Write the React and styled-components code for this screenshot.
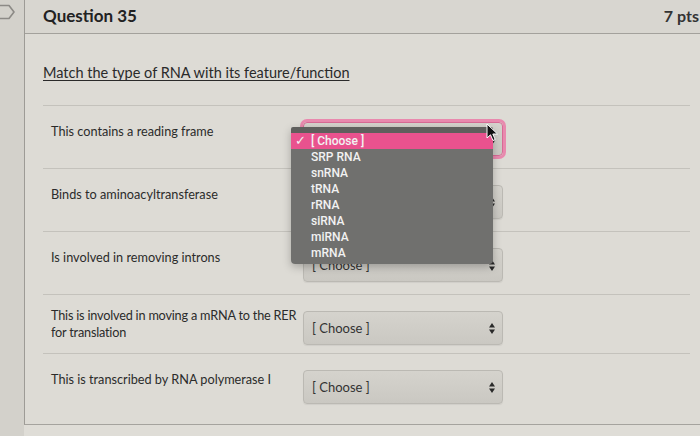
import React from "react";
import styled, { createGlobalStyle, css } from "styled-components";

const GlobalStyle = createGlobalStyle`
  html, body { margin: 0; padding: 0; }
  body {
    background: #dcdad4;
    font-family: Lato, "Open Sans", sans-serif;
    color: #2b2b2b;
  }
`;

const Page = styled.div`
  position: relative;
  display: flex;
  width: 700px;
  height: 436px;
  overflow: hidden;
  background: #dfddd7;
`;

const Gutter = styled.div`
  flex: none;
  width: 24px;
  height: 436px;
  background: #d3d1cb;
  padding-top: 4px;
  box-sizing: border-box;
`;

const Card = styled.section`
  flex: 1;
  align-self: flex-start;
  height: 425px;
  box-sizing: border-box;
  background: #dddbd5;
  border-left: 1px solid #9d9b96;
  border-bottom: 1px solid #a5a39e;
`;

const Header = styled.header`
  height: 34px;
  box-sizing: border-box;
  display: flex;
  align-items: center;
  justify-content: space-between;
  padding: 0 1px 2px 18px;
  background: #d8d6d0;
  border-bottom: 1px solid #a3a19c;
`;

const Title = styled.h2`
  margin: 0;
  font-size: 17px;
  font-weight: 700;
  color: #222;
`;

const Points = styled.span`
  font-size: 16px;
  font-weight: 700;
  color: #333;
`;

const Body = styled.div`
  padding: 30px 10px 0 18px;
`;

const Prompt = styled.p`
  margin: 0 0 23px;
  font-size: 14.5px;
  line-height: 18px;
  color: #2a2a2a;
  text-decoration: underline;
  text-decoration-thickness: 1px;
  text-underline-offset: 2px;
`;

const Rows = styled.div`
  border-top: 1px solid #c4c2bc;
`;

const Row = styled.div`
  display: flex;
  align-items: flex-start;
  padding: 16px 0 ${(p) => p.$bottom ?? 12}px 8px;
  border-bottom: ${(p) => (p.$last ? "none" : "1px solid #c4c2bc")};
`;

const Label = styled.div`
  flex: none;
  width: 252px;
  white-space: nowrap;
  font-size: 12.7px;
  line-height: 17px;
  color: #2b2b2b;
  margin-top: ${(p) => (p.$multi ? "-4px" : "1px")};
  letter-spacing: ${(p) => (p.$multi ? "-0.2px" : "0")};
`;

const Select = styled.div`
  flex: none;
  width: 200px;
  height: 34px;
  box-sizing: border-box;
  display: flex;
  align-items: center;
  justify-content: space-between;
  padding: 0 7px 0 8px;
  border: 1px solid #bbb9b3;
  border-radius: 4px;
  background: linear-gradient(#d5d3cd, #cac8c2);
  box-shadow: 0 1px 1px rgba(0, 0, 0, 0.06);
  font-size: 13px;
  color: #333;
  ${(p) =>
    p.$focused &&
    css`
      border-color: #d86a95;
      box-shadow: 0 0 0 3px #e989ae;
    `}
`;

const Arrows = styled.svg`
  flex: none;
`;

const Flag = styled.svg`
  display: block;
`;

const Menu = styled.ul`
  position: absolute;
  left: 291px;
  top: 127px;
  width: 202px;
  height: 137px;
  box-sizing: border-box;
  margin: 0;
  padding: 6px 0 0;
  list-style: none;
  background: linear-gradient(#5f5f5d 0, #5f5f5d 6px, #70706e 6px);
  border-radius: 2px 2px 4px 4px;
  box-shadow: 0 3px 8px rgba(0, 0, 0, 0.25);
  font-family: Roboto, "Liberation Sans", sans-serif;
  font-weight: 500;
  font-size: 12px;
  color: #f2f2f2;
`;

const Item = styled.li`
  position: relative;
  height: 16px;
  line-height: 16px;
  padding-left: 20px;
  background: ${(p) => (p.$selected ? "#e9528e" : "transparent")};
`;

const Check = styled.span`
  position: absolute;
  left: 4px;
  top: 0;
  font-family: "DejaVu Sans", sans-serif;
  font-size: 13px;
  font-weight: 700;
`;

const Pointer = styled.svg`
  position: absolute;
  left: 486px;
  top: 123px;
`;

const SelectArrows = () => (
  <Arrows width="6" height="11" viewBox="0 0 6 11">
    <path d="M3 0 L6 4.5 L0 4.5 Z M3 11 L6 6.5 L0 6.5 Z" fill="#2a2a2a" />
  </Arrows>
);

const rows = [
  { text: "This contains a reading frame", focused: true },
  { text: "Binds to aminoacyltransferase" },
  { text: "Is involved in removing introns" },
  { text: "This is involved in moving a mRNA to the RER", more: "for translation", bottom: 8 },
  { text: "This is transcribed by RNA polymerase I" },
];

const options = ["[ Choose ]", "SRP RNA", "snRNA", "tRNA", "rRNA", "siRNA", "miRNA", "mRNA"];

export default function App() {
  return (
    <>
      <GlobalStyle />
      <Page>
        <Gutter>
          <Flag width="16" height="16" viewBox="0 0 16 16">
            <path
              d="M-4 1.5 H9 L14 8 L9 14.5 H-4"
              fill="none"
              stroke="#8c8a86"
              strokeWidth="1.6"
              strokeLinejoin="round"
            />
          </Flag>
        </Gutter>
        <Card>
          <Header>
            <Title>Question 35</Title>
            <Points>7 pts</Points>
          </Header>
          <Body>
            <Prompt>Match the type of RNA with its feature/function</Prompt>
            <Rows>
              {rows.map((r, i) => (
                <Row key={i} $last={i === rows.length - 1} $bottom={r.bottom}>
                  <Label $multi={!!r.more}>
                    {r.text}
                    {r.more && (
                      <>
                        <br />
                        {r.more}
                      </>
                    )}
                  </Label>
                  <Select $focused={r.focused}>
                    <span>[ Choose ]</span>
                    <SelectArrows />
                  </Select>
                </Row>
              ))}
            </Rows>
          </Body>
        </Card>

        <Menu>
          {options.map((o, i) => (
            <Item key={o} $selected={i === 0}>
              {i === 0 && <Check>✓</Check>}
              {o}
            </Item>
          ))}
        </Menu>

        <Pointer width="14" height="20" viewBox="0 0 14 20">
          <path
            d="M1 1 L1 15 L4.5 11.8 L7 17.5 L9.2 16.5 L6.8 11 L11.5 11 Z"
            fill="#111"
            stroke="#fff"
            strokeWidth="1"
            strokeLinejoin="round"
          />
        </Pointer>
      </Page>
    </>
  );
}
